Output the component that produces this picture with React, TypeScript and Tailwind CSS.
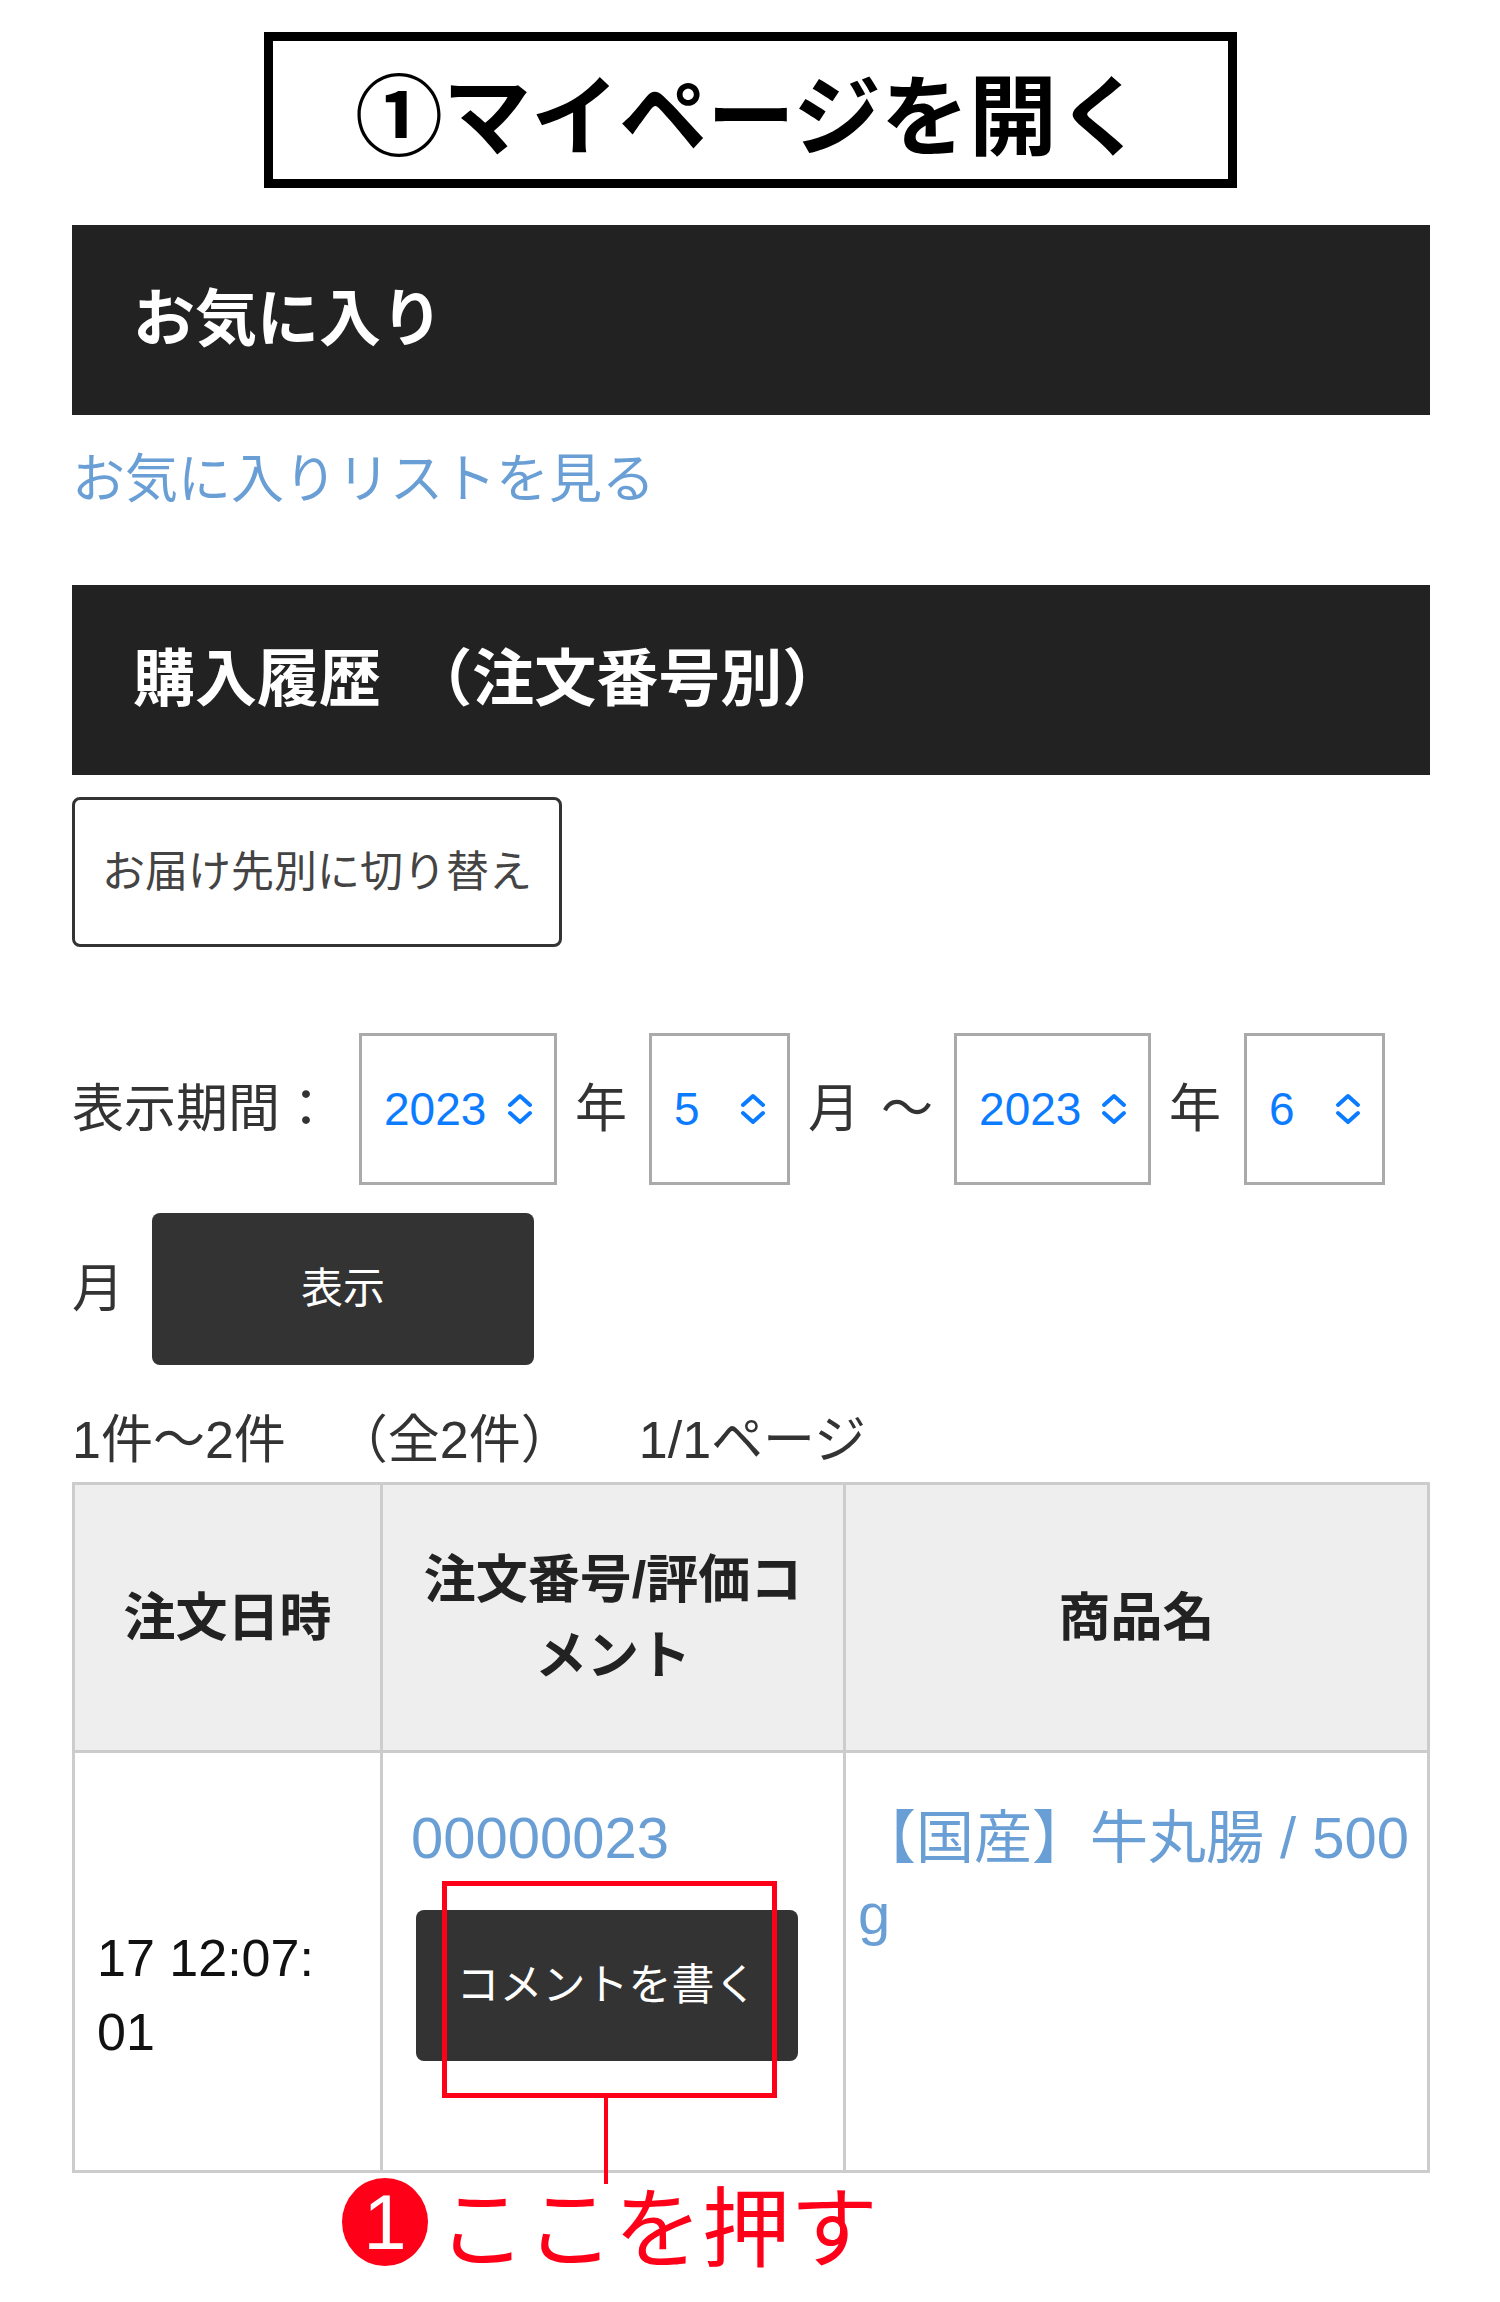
import React from "react";

function Chevrons() {
  return (
    <svg width="28" height="32" viewBox="0 0 28 32" fill="none" stroke="#0b7bff" strokeWidth="4" strokeLinecap="round" strokeLinejoin="round">
      <path d="M4 12 L14 3 L24 12" />
      <path d="M4 20 L14 29 L24 20" />
    </svg>
  );
}

function SelectBox({ value, width }: { value: string; width: string }) {
  return (
    <div className={`flex h-[152px] items-center justify-between border-[3px] border-[#aaaaaa] bg-white pl-[22px] pr-[20px] ${width}`}>
      <span className="text-[46px] leading-none text-[#0b7bff]">{value}</span>
      <Chevrons />
    </div>
  );
}

export default function App() {
  return (
    <div className="relative h-[2302px] w-[1500px] overflow-hidden bg-white font-['Liberation_Sans','Noto_Sans_CJK_JP',sans-serif] text-[#333]">
      {/* title */}
      <div className="mx-auto mt-[32px] flex h-[156px] w-[973px] items-center justify-center border-[9px] border-black">
        <span className="font-['Noto_Sans_CJK_JP',sans-serif] text-[88px] font-bold leading-none text-black">①マイページを開く</span>
      </div>

      <div className="pl-[72px] pr-[70px]">
        <div className="mt-[37px] flex h-[190px] items-center bg-[#222222] px-[61px]">
          <h2 className="text-[62px] font-bold leading-none text-white">お気に入り</h2>
        </div>
        <a className="mt-[25px] block text-[53px] leading-[80px] text-[#6a9fd6]">お気に入りリストを見る</a>

        <div className="mt-[65px] flex h-[190px] items-center bg-[#222222] px-[61px]">
          <h2 className="text-[62px] font-bold leading-none text-white">
            購入履歴 <span className="ml-[12px]">（注文番号別）</span>
          </h2>
        </div>

        <button className="mt-[22px] flex h-[150px] w-[490px] items-center justify-center rounded-[8px] border-[3px] border-[#333] bg-white text-[43px] text-[#444]">
          お届け先別に切り替え
        </button>

        {/* period filter */}
        <div className="mt-[86px] flex flex-wrap items-center gap-y-[28px] text-[52px] leading-none text-[#333]">
          <span className="mr-[27px]">表示期間：</span>
          <SelectBox value="2023" width="w-[198px] mr-[18px]" />
          <span className="mr-[22px]">年</span>
          <SelectBox value="5" width="w-[141px] mr-[18px]" />
          <span className="mr-[21px]">月</span>
          <span className="mr-[21px]">〜</span>
          <SelectBox value="2023" width="w-[197px] mr-[18px]" />
          <span className="mr-[23px]">年</span>
          <SelectBox value="6" width="w-[141px] mr-[18px]" />
          <span className="mr-[28px]">月</span>
          <button className="flex h-[152px] w-[382px] items-center justify-center rounded-[8px] bg-[#333333] text-[42px] text-white">表示</button>
        </div>

        <p className="mt-[49px] text-[52px] leading-[52px] text-[#333]">
          1件～2件　<span className="ml-[24px]">（全2件）</span>　<span className="ml-[40px]">1/1ページ</span>
        </p>

        <table className="mt-[16px] w-full table-fixed border-collapse border-[3px] border-[#cccccc]">
          <colgroup>
            <col className="w-[308px]" />
            <col className="w-[463px]" />
            <col />
          </colgroup>
          <thead>
            <tr className="h-[268px] bg-[#eeeeee] text-[52px] font-bold leading-[76px] text-[#222]">
              <th className="border-[3px] border-[#cccccc] px-[20px]">注文日時</th>
              <th className="border-[3px] border-[#cccccc] px-[24px]">注文番号/評価コメント</th>
              <th className="border-[3px] border-[#cccccc] px-[20px]">商品名</th>
            </tr>
          </thead>
          <tbody>
            <tr className="h-[420px]">
              <td className="border-[3px] border-[#cccccc] pl-[22px] pr-[40px] pt-[168px] align-top text-[52px] leading-[74px] break-all text-[#111]">
                17 12:07:01
              </td>
              <td className="border-[3px] border-[#cccccc] pl-[28px] pr-[20px] pt-[47px] align-top">
                <a className="block text-[58px] leading-[76px] text-[#6a9fd6]">00000023</a>
                <button className="ml-[5px] mt-[34px] flex h-[151px] w-[382px] items-center justify-center rounded-[8px] bg-[#333333] text-[43px] text-white">
                  コメントを書く
                </button>
              </td>
              <td className="border-[3px] border-[#cccccc] pl-[12px] pr-[10px] pt-[47px] align-top">
                <a className="block text-[58px] leading-[76px] break-all text-[#6a9fd6]">【国産】牛丸腸 / 500g</a>
              </td>
            </tr>
          </tbody>
        </table>

        {/* annotation label */}
        <div className="mt-[5px] flex items-center pl-[270px]">
          <span className="flex h-[88px] w-[86px] items-center justify-center rounded-[50%] bg-[#ff0019] text-[78px] leading-none text-white">1</span>
          <span className="ml-[10px] font-['Noto_Sans_CJK_JP',sans-serif] text-[88px] leading-[88px] text-[#ff0019]">ここを押す</span>
        </div>
      </div>

      {/* highlight box over the comment button */}
      <div className="absolute left-[442px] top-[1881px] h-[217px] w-[335px] border-[5px] border-[#ff0019]" />
      <div className="absolute left-[604px] top-[2096px] h-[88px] w-[4px] bg-[#ff0019]" />
    </div>
  );
}
